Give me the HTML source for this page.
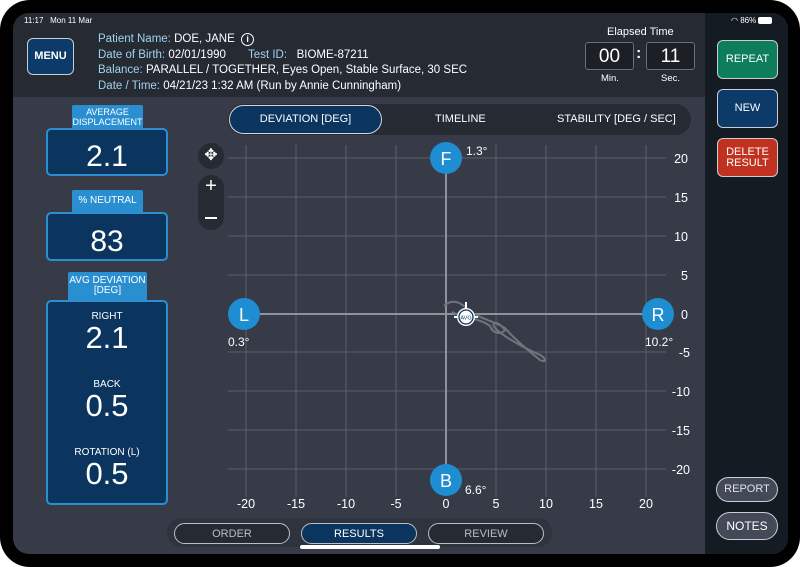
<!DOCTYPE html>
<html><head><meta charset="utf-8"><style>
*{margin:0;padding:0;box-sizing:border-box}
body{width:800px;height:567px;background:#fff;font-family:"Liberation Sans",sans-serif;overflow:hidden;position:relative}
.bez{position:absolute;left:0;top:0;width:800px;height:567px;background:#000;border-radius:30px}
.scr{position:absolute;left:13px;top:13px;width:775px;height:541px;background:#363b47;border-radius:16px;overflow:hidden}
.hdr{position:absolute;left:0;top:0;width:692px;height:84px;background:#262a33}
.side{position:absolute;left:692px;top:0;width:83px;height:541px;background:#151b22}
.a{position:absolute}
.t{color:#fff;white-space:nowrap}
.lb{color:#9fd3ef}
.btn{position:absolute;border:1.5px solid #c9ced6;border-radius:6px;color:#fff;font-size:11px;display:flex;align-items:center;justify-content:center;text-align:center;line-height:11px}
.tab{position:absolute;background:#2a8fd1;color:#fff;font-size:9px;text-align:center;line-height:10px;display:flex;align-items:center;justify-content:center;border-radius:2px 2px 0 0}
.box{position:absolute;background:#0b355e;border:2px solid #2a8fd1;border-radius:5px;color:#fff;text-align:center}
.pill{position:absolute;border:1.5px solid #b9bec6;border-radius:12px;color:#b9bec6;font-size:11px;display:flex;align-items:center;justify-content:center}
</style></head><body>
<div class="bez"></div>
<div class="scr">
<div class="hdr"></div>
<div class="side"></div>
<div class="a t" style="left:11px;top:3px;font-size:8px">11:17&nbsp;&nbsp; Mon 11 Mar</div>
<div class="a t" style="left:718px;top:3px;font-size:8px">&#x25E0; 86% <span style="display:inline-block;width:14px;height:7px;border:1px solid #fff;border-radius:2px;background:#fff;vertical-align:middle"></span></div>
<div class="btn" style="left:14px;top:25px;width:47px;height:37px;background:#0c3a69;font-weight:bold;font-size:11px">MENU</div>
<div class="a t" style="left:85px;top:19px;font-size:11.5px;line-height:15.5px">
<div><span class="lb">Patient Name:</span> DOE, JANE &nbsp;<span style="display:inline-block;width:13px;height:13px;border:1.3px solid #fff;border-radius:50%;font-size:9px;text-align:center;line-height:11px;font-weight:bold">i</span></div>
<div><span class="lb">Date of Birth:</span> 02/01/1990 &nbsp;&nbsp;&nbsp;&nbsp;&nbsp; <span class="lb">Test ID:</span> &nbsp; BIOME-87211</div>
<div><span class="lb">Balance:</span> PARALLEL / TOGETHER, Eyes Open, Stable Surface, 30 SEC</div>
<div><span class="lb">Date / Time:</span> 04/21/23 1:32 AM (Run by Annie Cunningham)</div>
</div>
<div class="a t" style="left:594px;top:13px;font-size:11px">Elapsed Time</div>
<div class="a t" style="left:572px;top:29px;width:49px;height:28px;border:1px solid #6b707a;border-radius:3px;background:#1c1f26;font-size:19px;text-align:center;line-height:27px">00</div>
<div class="a t" style="left:623px;top:32px;font-size:16px;font-weight:bold">:</div>
<div class="a t" style="left:633px;top:29px;width:49px;height:28px;border:1px solid #6b707a;border-radius:3px;background:#1c1f26;font-size:19px;text-align:center;line-height:27px">11</div>
<div class="a t" style="left:588px;top:60px;font-size:9.5px">Min.</div>
<div class="a t" style="left:648px;top:60px;font-size:9.5px">Sec.</div>

<div class="btn" style="left:704px;top:27px;width:61px;height:39px;background:#0e7d5a">REPEAT</div>
<div class="btn" style="left:704px;top:76px;width:61px;height:39px;background:#0c3a69">NEW</div>
<div class="btn" style="left:704px;top:125px;width:61px;height:39px;background:#c0321f">DELETE<br>RESULT</div>
<div class="btn" style="left:703px;top:464px;width:62px;height:25px;background:#434956;border-radius:13px;color:#dfe3e8">REPORT</div>
<div class="btn" style="left:703px;top:499px;width:62px;height:28px;background:#434956;border-radius:14px;color:#fff;font-size:12px">NOTES</div>

<div class="tab" style="left:59px;top:92px;width:71px;height:23px">AVERAGE<br>DISPLACEMENT</div>
<div class="box" style="left:33px;top:115px;width:122px;height:48px;font-size:30px;line-height:54px">2.1</div>
<div class="tab" style="left:59px;top:177px;width:71px;height:22px;font-size:10px">% NEUTRAL</div>
<div class="box" style="left:33px;top:199px;width:122px;height:49px;font-size:30px;line-height:55px">83</div>
<div class="tab" style="left:55px;top:259px;width:79px;height:28px;font-size:10px">AVG DEVIATION<br>[DEG]</div>
<div class="box" style="left:33px;top:287px;width:122px;height:205px">
<div style="font-size:10px;margin-top:9px">RIGHT</div><div style="font-size:31px;line-height:32px">2.1</div>
<div style="font-size:10px;margin-top:25px">BACK</div><div style="font-size:31px;line-height:32px">0.5</div>
<div style="font-size:10px;margin-top:25px">ROTATION (L)</div><div style="font-size:31px;line-height:32px">0.5</div>
</div>

<div class="a" style="left:215px;top:91px;width:463px;height:31px;background:#262a33;border-radius:16px"></div>
<div class="a t" style="left:216px;top:92px;width:153px;height:29px;background:#0b355e;border:1.5px solid #d0d5dc;border-radius:15px;font-size:11px;text-align:center;line-height:26px">DEVIATION [DEG]</div>
<div class="a t" style="left:422px;top:100px;font-size:11px">TIMELINE</div>
<div class="a t" style="left:544px;top:100px;font-size:11px">STABILITY [DEG / SEC]</div>

<div class="a" style="left:185px;top:130px;width:26px;height:26px;border-radius:50%;background:#262a33;color:#fff;font-size:16px;text-align:center;line-height:26px">&#x2725;</div>
<div class="a" style="left:185px;top:162px;width:26px;height:55px;border-radius:13px;background:#262a33"></div>
<div class="a t" style="left:189px;top:162px;font-size:20px;width:18px;text-align:center">+</div>
<div class="a" style="left:192px;top:204px;width:12px;height:1.5px;background:#fff"></div>

<svg class="a" style="left:0;top:0" width="692" height="541" viewBox="13 13 692 541">
<g stroke="#5a5f6b" stroke-width="1">
<line x1="246" y1="145" x2="246" y2="497"/><line x1="296" y1="145" x2="296" y2="497"/><line x1="346" y1="145" x2="346" y2="497"/><line x1="396" y1="145" x2="396" y2="497"/><line x1="496" y1="145" x2="496" y2="497"/><line x1="546" y1="145" x2="546" y2="497"/><line x1="596" y1="145" x2="596" y2="497"/><line x1="646" y1="145" x2="646" y2="497"/>
<line x1="228" y1="158" x2="666" y2="158"/><line x1="228" y1="197" x2="666" y2="197"/><line x1="228" y1="236" x2="666" y2="236"/><line x1="228" y1="275" x2="666" y2="275"/><line x1="228" y1="352" x2="666" y2="352"/><line x1="228" y1="391" x2="666" y2="391"/><line x1="228" y1="430" x2="666" y2="430"/><line x1="228" y1="469" x2="666" y2="469"/>
</g>
<g stroke="#8d929b" stroke-width="2"><line x1="446" y1="158" x2="446" y2="480"/><line x1="244" y1="314" x2="660" y2="314"/></g>
<path d="M444 306 C452 298 462 302 470 312 C480 318 495 322 505 328 C515 340 530 352 540 360 C548 364 545 356 538 354 C525 348 505 338 495 328 C490 322 498 320 505 330 C500 336 492 332 490 326 C480 318 462 318 452 312" fill="none" stroke="#6f747d" stroke-width="2"/>
<g stroke="#fff" stroke-width="2"><line x1="466" y1="302" x2="466" y2="326"/><line x1="454" y1="317" x2="478" y2="317"/></g>
<circle cx="466" cy="317" r="9" fill="#fff"/><circle cx="466" cy="317" r="7" fill="none" stroke="#0b355e" stroke-width="1.3"/>
<text x="466" y="319.5" font-size="5.5" fill="#0b355e" text-anchor="middle" font-family="Liberation Sans">AVG</text>
<g fill="#1e8dd2"><circle cx="446" cy="158" r="16"/><circle cx="244" cy="314" r="16"/><circle cx="658" cy="314" r="16"/><circle cx="446" cy="480" r="16"/></g>
<g fill="#fff" font-size="18" text-anchor="middle" font-family="Liberation Sans"><text x="446" y="165">F</text><text x="244" y="321">L</text><text x="658" y="321">R</text><text x="446" y="487">B</text></g>
<g fill="#fff" font-size="12" font-family="Liberation Sans">
<text x="466" y="155">1.3°</text><text x="228" y="346">0.3°</text><text x="645" y="346">10.2°</text><text x="465" y="494">6.6°</text>
</g>
<g fill="#fff" font-size="12.5" font-family="Liberation Sans" text-anchor="middle">
<text x="246" y="508">-20</text><text x="296" y="508">-15</text><text x="346" y="508">-10</text><text x="396" y="508">-5</text><text x="446" y="508">0</text><text x="496" y="508">5</text><text x="546" y="508">10</text><text x="596" y="508">15</text><text x="646" y="508">20</text>
</g>
<g fill="#fff" font-size="12.5" font-family="Liberation Sans" text-anchor="end">
<text x="688" y="163">20</text><text x="688" y="202">15</text><text x="688" y="241">10</text><text x="688" y="280">5</text><text x="688" y="319">0</text><text x="690" y="357">-5</text><text x="690" y="396">-10</text><text x="690" y="435">-15</text><text x="690" y="474">-20</text>
</g>
</svg>

<div class="a" style="left:154px;top:505px;width:385px;height:29px;background:#2e333d;border-radius:14px"></div>
<div class="pill" style="left:161px;top:510px;width:116px;height:21px;background:#262a33">ORDER</div>
<div class="pill" style="left:288px;top:510px;width:116px;height:21px;background:#0b355e;color:#fff">RESULTS</div>
<div class="pill" style="left:415px;top:510px;width:116px;height:21px;background:#262a33">REVIEW</div>
<div class="a" style="left:287px;top:532px;width:140px;height:4px;background:#fff;border-radius:2px"></div>
</div>
</body></html>
